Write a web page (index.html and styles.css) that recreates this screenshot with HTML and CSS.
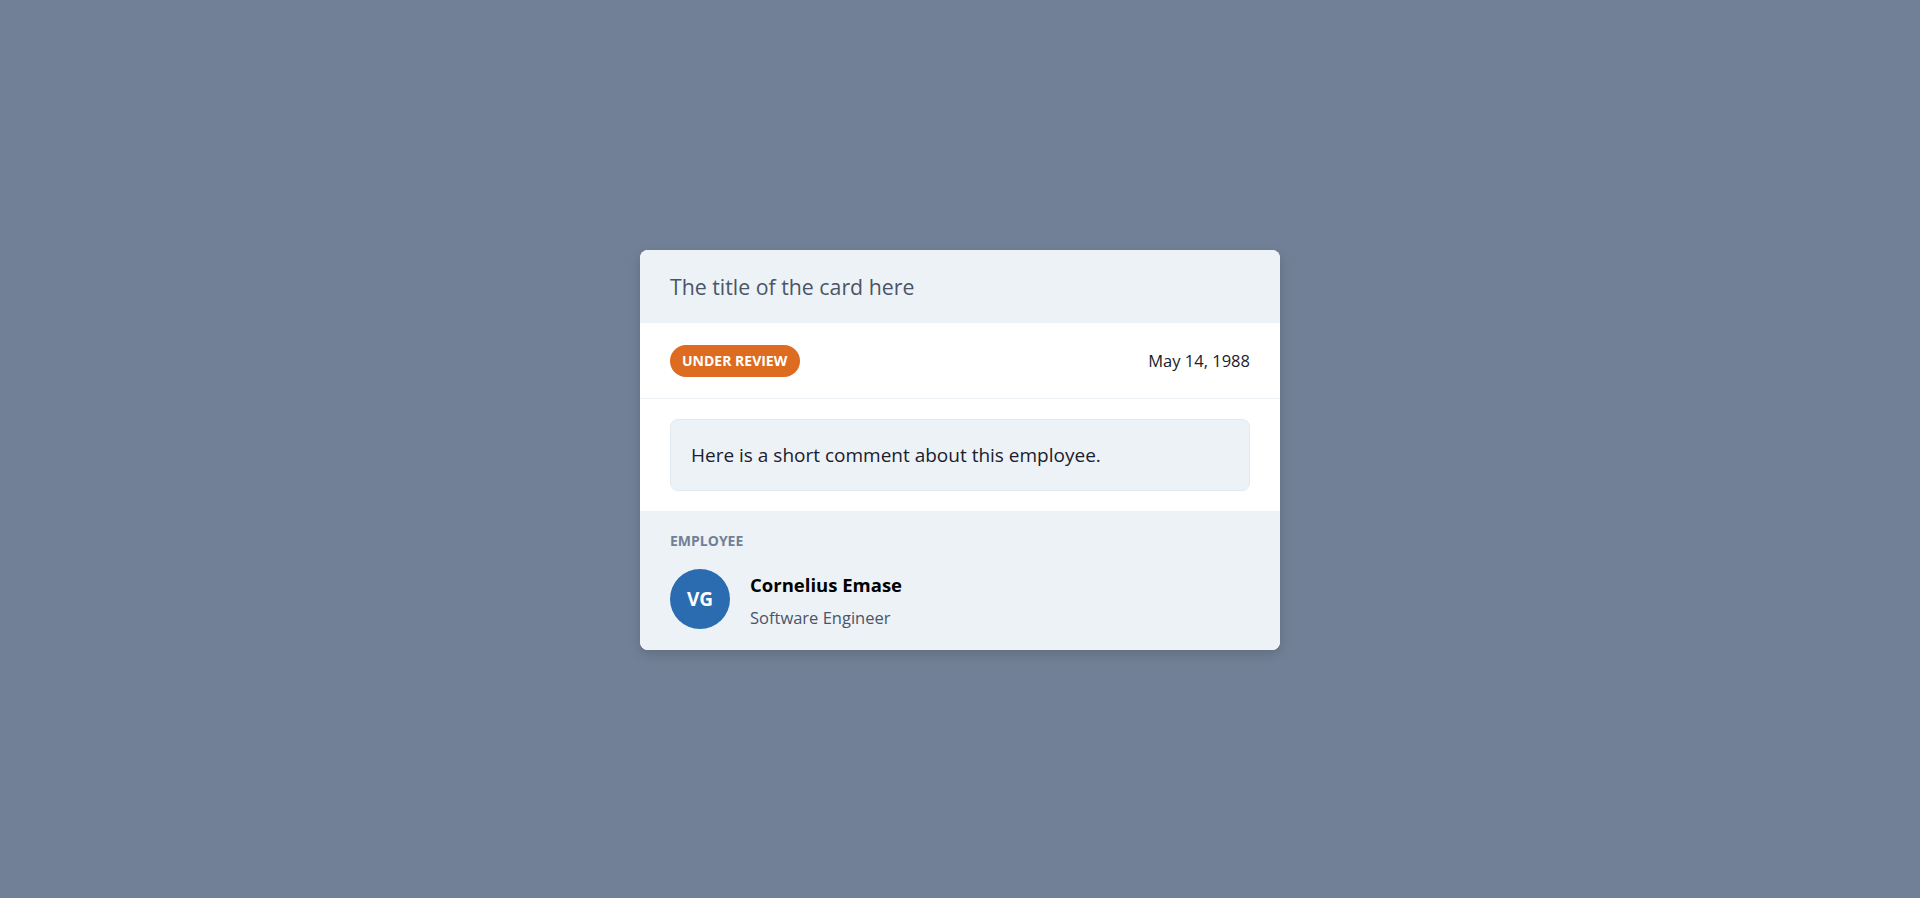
FILE: index.html
```html
<!DOCTYPE html>
<html lang="en">

<head>
    <meta charset="UTF-8">
    <meta name="viewport" content="width=device-width, initial-scale=1.0">
    <title>Card</title>
    <link rel="stylesheet" href="styles.css">
</head>

<body>
    <div class="page">
        <div class="card">
            <div class="card-head">
                <h2>The title of the card here</h2>
            </div>
            <div class="card-status">
                <span class="badge">Under Review</span>
                <span class="date">May 14, 1988</span>
            </div>
            <div class="card-body">
                <p class="comment">Here is a short comment about this employee.</p>
            </div>
            <div class="card-foot">
                <p class="label">Employee</p>
                <div class="person">
                    <div class="avatar">VG</div>
                    <div class="info">
                        <p class="name">Cornelius Emase</p>
                        <p class="role">Software Engineer</p>
                    </div>
                </div>
            </div>
        </div>
    </div>
</body>

</html>
```

FILE: styles.css
```css
* {
    margin: 0;
    padding: 0;
    box-sizing: border-box;
}

body {
    font-family: "Open Sans", "Noto Sans", sans-serif;
    background-color: #718096;
}

.page {
    height: 100vh;
    width: 100vw;
    padding-top: 2px;
    display: flex;
    justify-content: center;
    align-items: center;
}

.card {
    width: 640px;
    background-color: #fff;
    border-radius: 8px;
    overflow: hidden;
    box-shadow: 0 4px 12px rgba(0, 0, 0, 0.15);
}

.card-head {
    background-color: #edf2f7;
    height: 73px;
    padding: 0 30px;
    display: flex;
    align-items: center;
}

.card-head h2 {
    font-size: 21.3px;
    font-weight: 400;
    color: #4a5568;
}

.card-status {
    height: 76px;
    padding: 0 30px;
    display: flex;
    justify-content: space-between;
    align-items: center;
    border-bottom: 1px solid #edf2f7;
}

.badge {
    background-color: #dd6b20;
    color: #fff;
    font-size: 14px;
    font-weight: 700;
    text-transform: uppercase;
    height: 32px;
    padding: 0 13px 0 12px;
    border-radius: 16px;
    display: flex;
    align-items: center;
}

.date {
    font-size: 16.5px;
    color: #1a202c;
}

.card-body {
    padding: 20px 30px;
}

.comment {
    background-color: #edf2f7;
    border: 1px solid #e2e8f0;
    border-radius: 8px;
    height: 72px;
    padding: 0 20px;
    display: flex;
    align-items: center;
    font-size: 19px;
    color: #1a202c;
}

.card-foot {
    background-color: #edf2f7;
    padding: 20px 30px 21px;
}

.label {
    font-size: 14px;
    font-weight: 700;
    color: #718096;
    text-transform: uppercase;
    line-height: 20px;
}

.person {
    margin-top: 18px;
    display: flex;
    align-items: flex-start;
    gap: 20px;
}

.avatar {
    width: 60px;
    height: 60px;
    border-radius: 50%;
    background-color: #2b6cb0;
    color: #fff;
    font-size: 19px;
    font-weight: 700;
    display: flex;
    justify-content: center;
    align-items: center;
}

.info {
    padding-top: 3px;
}

.name {
    font-size: 18.5px;
    font-weight: 700;
    color: #000;
    line-height: 26px;
}

.role {
    margin-top: 9px;
    font-size: 16.5px;
    color: #4a5568;
    line-height: 22px;
}
```
